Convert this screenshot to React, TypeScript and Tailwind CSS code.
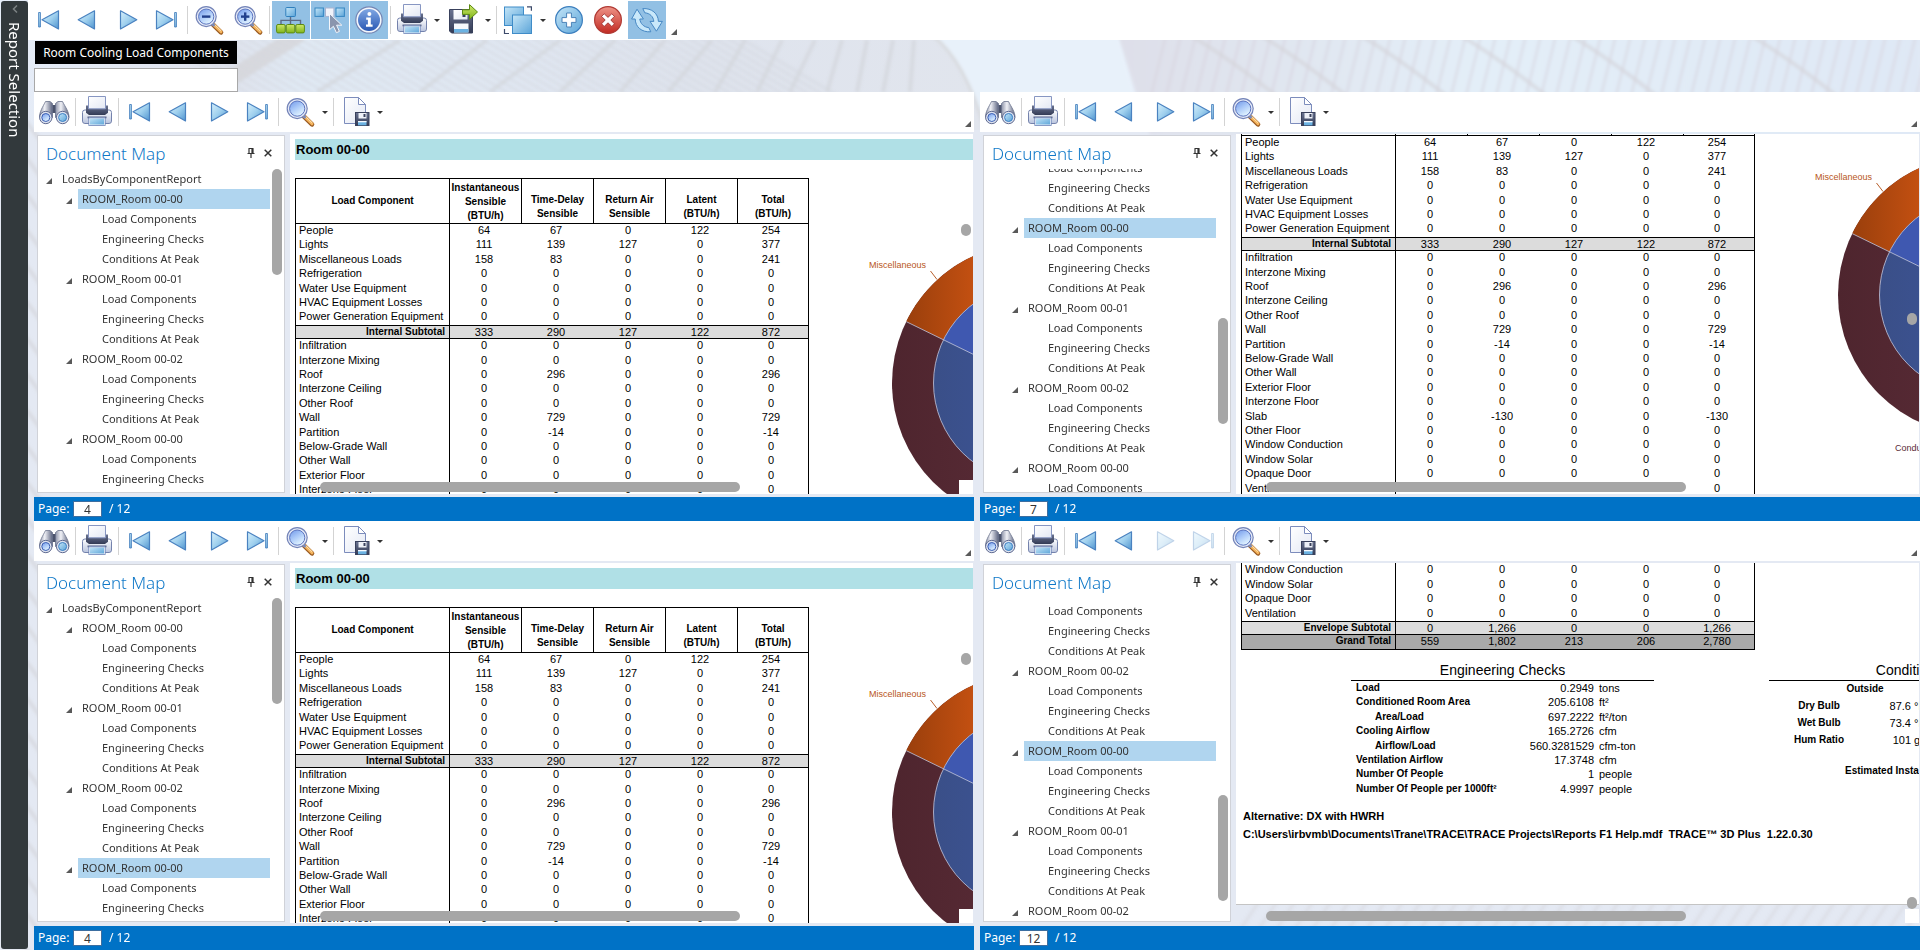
import React from "react";

const UI = "font-['Noto_Sans','Open_Sans',sans-serif]";
const DOC = "font-['Liberation_Sans',Arial,sans-serif]";

/* ---------- icons ---------- */

function Defs() {
  return (
    <svg className="absolute h-0 w-0" aria-hidden="true">
      <defs>
        <linearGradient id="nav" x1="0" y1="0" x2="1" y2="1">
          <stop offset="0" stopColor="#d6effb" />
          <stop offset="0.5" stopColor="#9fd0ee" />
          <stop offset="1" stopColor="#4f94cf" />
        </linearGradient>
        <linearGradient id="lens" x1="0" y1="0" x2="0.6" y2="1">
          <stop offset="0" stopColor="#6f97e8" />
          <stop offset="0.5" stopColor="#a9c8f8" />
          <stop offset="1" stopColor="#e2f4ff" />
        </linearGradient>
        <linearGradient id="metal" x1="0" y1="0" x2="0" y2="1">
          <stop offset="0" stopColor="#ffffff" />
          <stop offset="1" stopColor="#b9c4de" />
        </linearGradient>
        <linearGradient id="paper" x1="0" y1="0" x2="1" y2="1">
          <stop offset="0" stopColor="#ffffff" />
          <stop offset="1" stopColor="#e3e8f4" />
        </linearGradient>
        <linearGradient id="barrel" x1="0" y1="0" x2="1" y2="0">
          <stop offset="0" stopColor="#8d93a8" />
          <stop offset="0.4" stopColor="#f0f1f6" />
          <stop offset="1" stopColor="#5c6480" />
        </linearGradient>
        <linearGradient id="slate" x1="0" y1="0" x2="0" y2="1">
          <stop offset="0" stopColor="#6a7391" />
          <stop offset="1" stopColor="#333b55" />
        </linearGradient>
        <linearGradient id="sky" x1="0" y1="0" x2="1" y2="1">
          <stop offset="0" stopColor="#c5e6f8" />
          <stop offset="1" stopColor="#5ba4d8" />
        </linearGradient>
        <linearGradient id="lime" x1="0" y1="0" x2="0" y2="1">
          <stop offset="0" stopColor="#cfe86a" />
          <stop offset="1" stopColor="#7fb41c" />
        </linearGradient>
        <linearGradient id="red" x1="0" y1="0" x2="0" y2="1">
          <stop offset="0" stopColor="#ee9488" />
          <stop offset="1" stopColor="#c22a22" />
        </linearGradient>
        <linearGradient id="royal" x1="0" y1="0" x2="0" y2="1">
          <stop offset="0" stopColor="#7fa6e2" />
          <stop offset="1" stopColor="#2a59b4" />
        </linearGradient>
        <linearGradient id="wedgeOrange" x1="0" y1="0" x2="1" y2="0">
          <stop offset="0" stopColor="#9a3f0c" />
          <stop offset="0.6" stopColor="#c85212" />
          <stop offset="1" stopColor="#d65a16" />
        </linearGradient>
        <linearGradient id="wedgeMaroon" x1="0" y1="0" x2="1" y2="0">
          <stop offset="0" stopColor="#4e252e" />
          <stop offset="1" stopColor="#663240" />
        </linearGradient>
        <linearGradient id="wedgeBlue" x1="0" y1="0" x2="1" y2="0">
          <stop offset="0" stopColor="#3a4f88" />
          <stop offset="1" stopColor="#405aa8" />
        </linearGradient>
      </defs>
    </svg>
  );
}

function Svg({ children }: { children: React.ReactNode }) {
  return (
    <svg viewBox="0 0 38 38" className="h-[38px] w-[38px]" aria-hidden="true">
      {children}
    </svg>
  );
}

const navStroke = { fill: "url(#nav)", stroke: "#4a82c0", strokeWidth: 1.2, strokeLinejoin: "round" as const };

const FirstIcon = () => (
  <Svg>
    <rect x="8.6" y="11.5" width="1.8" height="14.5" {...navStroke} strokeWidth={0.9} />
    <path d="M12 18.8 28.5 9.8V28Z" {...navStroke} />
  </Svg>
);
const PrevIcon = () => (
  <Svg>
    <path d="M9.2 18.8 25.5 9.8V28Z" {...navStroke} />
  </Svg>
);
const NextIcon = () => (
  <Svg>
    <path d="M28.8 18.8 12.5 9.8V28Z" {...navStroke} />
  </Svg>
);
const LastIcon = () => (
  <Svg>
    <path d="M26 18.8 9.5 9.8V28Z" {...navStroke} />
    <rect x="27.6" y="11.5" width="1.8" height="14.5" {...navStroke} strokeWidth={0.9} />
  </Svg>
);

function Magnifier({ sign }: { sign?: "+" | "-" }) {
  return (
    <Svg>
      <path d="M22.8 23.4 31 31.3" stroke="#9a5a20" strokeWidth="4.6" strokeLinecap="round" />
      <path d="M23.4 23.4 31 30.8" stroke="#f5b55e" strokeWidth="3" strokeLinecap="round" />
      <path d="M23.6 22.6 30.8 29.6" stroke="#fde3b4" strokeWidth="1" strokeLinecap="round" />
      <path d="m21.5 22 3 3" stroke="#7d8bb4" strokeWidth="3" />
      <circle cx="16.2" cy="15.6" r="10" fill="#e6ebf7" stroke="#7484b8" strokeWidth="1.2" />
      <circle cx="16.2" cy="15.6" r="7.6" fill="url(#lens)" stroke="#5b74bf" strokeWidth="1" />
      {sign && <path d="M12 15.6h8.4" stroke="#22408c" strokeWidth="2.4" />}
      {sign === "+" && <path d="M16.2 11.4v8.4" stroke="#22408c" strokeWidth="2.4" />}
    </Svg>
  );
}

const HierarchyIcon = () => (
  <Svg>
    <path d="M18.5 15v8M9 23v-3.6h19.5V23" fill="none" stroke="#5c6a85" strokeWidth="1.4" />
    <rect x="13.8" y="6.5" width="9.6" height="9" rx="0.8" fill="url(#sky)" stroke="#2f7fbd" />
    {[4.6, 14.2, 23.8].map((x) => (
      <rect key={x} x={x} y="23.5" width="8.6" height="8.4" rx="1.4" fill="url(#lime)" stroke="#5c8a12" />
    ))}
  </Svg>
);

const SelectIcon = () => (
  <Svg>
    <rect x="4" y="7" width="8.4" height="8.4" fill="url(#sky)" stroke="#3787c2" />
    <rect x="14.5" y="7" width="8.4" height="8.4" fill="#f1f3fa" stroke="#a9b3d0" />
    <rect x="25" y="7" width="8.4" height="8.4" fill="url(#sky)" stroke="#3787c2" />
    <path d="M18.5 12.5v16.2l3.9-3.4 3 6.4 3-1.3-2.8-6.2h5.2Z" fill="#8a95ad" stroke="#f4f6fb" strokeWidth="1" />
  </Svg>
);

const InfoIcon = () => (
  <Svg>
    <circle cx="19" cy="19" r="13.2" fill="#f3f6fc" stroke="#7486b4" strokeWidth="1.2" />
    <circle cx="19" cy="19" r="11" fill="url(#royal)" />
    <circle cx="19.4" cy="13" r="2" fill="#fff" />
    <path d="M16.2 16.6h4.6v7h1.8v2.2h-6.6v-2.2h1.9v-4.8h-1.7Z" fill="#fff" />
  </Svg>
);

const PrinterIcon = () => (
  <Svg>
    <rect x="4.5" y="17" width="29" height="13.5" rx="2.4" fill="url(#metal)" stroke="#7482ac" />
    <path d="M8 12.5h22v7.200l-3 2.300H11l-3-2.300Z" fill="url(#slate)" />
    <path d="M10.500 3.500h17v12.300h-17Z" fill="url(#paper)" stroke="#8796c2" />
    <rect x="9.500" y="23.500" width="19" height="1.800" fill="#5d6788" />
    <rect x="11.500" y="25" width="15" height="7" fill="url(#sky)" stroke="#eef5fc" />
    <rect x="10.800" y="24.800" width="16.400" height="7.600" fill="none" stroke="#6c84b8" strokeWidth="0.800" />
  </Svg>
);

const SaveExportIcon = () => (
  <Svg>
    <path d="M5.5 8.5h23V32h-21l-2-2Z" fill="url(#slate)" stroke="#39415c" />
    <rect x="9.5" y="9" width="14" height="9.5" fill="url(#paper)" />
    <rect x="18.5" y="10" width="3" height="6" fill="#39415c" />
    <rect x="10" y="22.5" width="14.5" height="9" fill="#f6f9fd" />
    <rect x="10" y="28" width="14.5" height="3.5" fill="#6bb2e2" />
    <path d="M18.5 8.8h7V3.6l8 7.4-8 7.4v-5h-7Z" fill="url(#lime)" stroke="#5c8a12" />
  </Svg>
);

const CopyIcon = () => (
  <Svg>
    <rect x="5.5" y="6" width="19" height="18.5" fill="url(#sky)" stroke="#3f8cc8" />
    <rect x="13.5" y="14" width="19" height="18.500" fill="url(#sky)" stroke="#3f8cc8" />
    <path d="M28 5.800h4.400v4M5.500 28v4.500H10" fill="none" stroke="#3c4a6a" strokeWidth="1.200" />
  </Svg>
);

const AddIcon = () => (
  <Svg>
    <circle cx="19" cy="19" r="13.400" fill="url(#sky)" stroke="#3d7fbe" strokeWidth="1.200" />
    <path d="M16.600 12h4.800v4.600H26v4.800h-4.600V26h-4.800v-4.600H12v-4.800h4.600Z" fill="#fff" stroke="#4a82b8" />
  </Svg>
);

const DeleteIcon = () => (
  <Svg>
    <circle cx="19" cy="19" r="13.400" fill="url(#red)" stroke="#b03a34" strokeWidth="1.200" />
    <path
      d="m15.200 12.800 3.800 3.600 3.800-3.600 2.600 2.600-3.600 3.600 3.600 3.800-2.600 2.600-3.800-3.600-3.800 3.600-2.600-2.600 3.600-3.800-3.600-3.600Z"
      fill="#fff"
      stroke="#8f1a18"
      strokeWidth="0.700"
    />
  </Svg>
);

const RefreshIcon = () => (
  <Svg>
    <path
      d="M9 8.200 15.400 18h-3.600c.4 4.400 4 8.200 9 8.600l2 4.200C13.600 31.400 7.400 26 7.200 18H3.600Z"
      fill="#c9e8fa"
      stroke="#4788c4"
    />
    <path
      d="M28.400 30.200 22 20.400h3.800c-.4-4.800-4-8.200-9-8.600l-2-4.200c9-.6 15.400 5 15.600 12.800H34.400Z"
      fill="#c9e8fa"
      stroke="#4788c4"
    />
  </Svg>
);

const BinocularsIcon = () => (
  <Svg>
    <rect x="16" y="12" width="7" height="8" fill="#4b536c" />
    <path d="M10.500 8.500h4.500l2.500 2v14H4.500c0-6 3-10 6-16Z" fill="url(#barrel)" stroke="#6a728c" strokeWidth="0.800" />
    <path d="M27.500 8.500H23l-2.500 2v14h13.500c0-6-3.500-10-6.500-16Z" fill="url(#barrel)" stroke="#6a728c" strokeWidth="0.800" />
    <circle cx="10.800" cy="24.500" r="6.200" fill="#dfe4f0" stroke="#5e6990" />
    <circle cx="10.800" cy="24.500" r="4" fill="url(#lens)" stroke="#3c5fb4" />
    <circle cx="27.600" cy="24.500" r="6.200" fill="#dfe4f0" stroke="#5e6990" />
    <circle cx="27.600" cy="24.500" r="4" fill="url(#sky)" stroke="#3c7fc4" />
  </Svg>
);

const SaveDocIcon = () => (
  <Svg>
    <path d="M8.500 4.500h14l7 7V30.500h-21Z" fill="url(#paper)" stroke="#7c8cbc" />
    <path d="M22.500 4.500v7h7Z" fill="#fff" stroke="#7c8cbc" />
    <rect x="19.500" y="19.500" width="13.500" height="13" fill="url(#slate)" stroke="#39415c" />
    <rect x="22.500" y="20" width="8" height="5.500" fill="#eef1f8" />
    <rect x="27.500" y="21" width="2" height="3" fill="#39415c" />
    <rect x="22" y="28" width="8.500" height="4.300" fill="#6bb2e2" />
    <rect x="22" y="28" width="8.500" height="1.300" fill="#f6f9fd" />
  </Svg>
);

/* ---------- toolbar parts ---------- */

function ToolButton({
  label,
  active,
  disabled,
  children,
}: {
  label: string;
  active?: boolean;
  disabled?: boolean;
  children: React.ReactNode;
}) {
  return (
    <button
      type="button"
      aria-label={label}
      disabled={disabled}
      className={
        "flex h-[38px] w-[38px] shrink-0 items-center justify-center " +
        (active ? "bg-[#92c0e4] " : "") +
        (disabled ? "opacity-35" : "")
      }
    >
      {children}
    </button>
  );
}

function Caret({ label }: { label: string }) {
  return (
    <button type="button" aria-label={label} className="-ml-px flex h-[38px] w-3 shrink-0 items-center justify-center">
      <svg viewBox="0 0 6 3" className="h-[3px] w-[6px]" aria-hidden="true">
        <path d="M0 0h6L3 3Z" fill="#333" />
      </svg>
    </button>
  );
}

const Separator = () => <span className="mx-px h-7 w-px shrink-0 bg-[#d3d3d3]" />;

const Grip = () => (
  <svg viewBox="0 0 6 6" className="mb-[5px] h-[6px] w-[6px] shrink-0 self-end" aria-hidden="true">
    <path d="M6 0v6H0Z" fill="#5a5a5a" />
  </svg>
);

function MainToolbar() {
  return (
    <div role="toolbar" aria-label="Report tools" className="flex h-10 shrink-0 items-center gap-px bg-white pl-0.5">
      <ToolButton label="First page"><FirstIcon /></ToolButton>
      <ToolButton label="Previous page"><PrevIcon /></ToolButton>
      <ToolButton label="Next page"><NextIcon /></ToolButton>
      <ToolButton label="Last page"><LastIcon /></ToolButton>
      <Separator />
      <ToolButton label="Zoom out"><Magnifier sign="-" /></ToolButton>
      <ToolButton label="Zoom in"><Magnifier sign="+" /></ToolButton>
      <Separator />
      <ToolButton label="Document map" active><HierarchyIcon /></ToolButton>
      <ToolButton label="Select" active><SelectIcon /></ToolButton>
      <ToolButton label="Information" active><InfoIcon /></ToolButton>
      <Separator />
      <ToolButton label="Print"><PrinterIcon /></ToolButton>
      <Caret label="Print options" />
      <ToolButton label="Export"><SaveExportIcon /></ToolButton>
      <Caret label="Export options" />
      <Separator />
      <ToolButton label="Copy view"><CopyIcon /></ToolButton>
      <Caret label="Copy options" />
      <ToolButton label="Add"><AddIcon /></ToolButton>
      <ToolButton label="Remove"><DeleteIcon /></ToolButton>
      <ToolButton label="Synchronize" active><RefreshIcon /></ToolButton>
      <span className="w-[3px]" />
      <Grip />
    </div>
  );
}

function PanelToolbar({ atEnd }: { atEnd?: boolean }) {
  return (
    <div role="toolbar" aria-label="Page tools" className="flex h-10 shrink-0 items-center gap-px bg-white pr-[3px] pl-px">
      <ToolButton label="Find"><BinocularsIcon /></ToolButton>
      <Separator />
      <ToolButton label="Print"><PrinterIcon /></ToolButton>
      <Separator />
      <ToolButton label="First page"><FirstIcon /></ToolButton>
      <ToolButton label="Previous page"><PrevIcon /></ToolButton>
      <ToolButton label="Next page" disabled={atEnd}><NextIcon /></ToolButton>
      <ToolButton label="Last page" disabled={atEnd}><LastIcon /></ToolButton>
      <Separator />
      <ToolButton label="Zoom"><Magnifier /></ToolButton>
      <Caret label="Zoom options" />
      <Separator />
      <ToolButton label="Save document"><SaveDocIcon /></ToolButton>
      <Caret label="Save options" />
      <span className="flex-1" />
      <Grip />
    </div>
  );
}

/* ---------- document map ---------- */

type Node = { text: string; level: 0 | 1 | 2; selected?: boolean };

function room(name: string, selected = false): Node[] {
  return [
    { text: `ROOM_Room ${name}`, level: 1, selected },
    { text: "Load Components", level: 2 },
    { text: "Engineering Checks", level: 2 },
    { text: "Conditions At Peak", level: 2 },
  ];
}

const indent = { 0: "pl-2", 1: "pl-7", 2: "pl-[64px]" };

function DocumentMap({ nodes, scroll, thumb }: { nodes: Node[]; scroll: string; thumb: string }) {
  return (
    <section className="mt-[3px] mb-px ml-[3px] flex w-[248px] shrink-0 flex-col overflow-hidden border border-[#d0d2d8] bg-white">
      <header className="flex h-[33px] shrink-0 items-center pr-[10px] pl-2">
        <h2 className="mt-[2px] flex-1 text-[17px] leading-6 font-light text-[#0f78c8]">Document Map</h2>
        <button type="button" aria-label="Pin" className="mr-[5px] flex h-4 w-3 items-center justify-center">
          <svg viewBox="0 0 8 10" className="h-[10px] w-2" aria-hidden="true">
            <path d="M1.500.5h5M2 .5v5M5 .5v5M6 .5v5M.5 5.500h7M4 6v4" stroke="#333" strokeWidth="1.200" fill="none" />
          </svg>
        </button>
        <button type="button" aria-label="Close" className="flex h-4 w-3 items-center justify-center">
          <svg viewBox="0 0 8 8" className="h-2 w-2" aria-hidden="true">
            <path d="m.7.7 6.600 6.600m0-6.600L.7 7.300" stroke="#333" strokeWidth="1.500" />
          </svg>
        </button>
      </header>
      <div className="relative min-h-0 flex-1 overflow-hidden">
        <ul className={scroll}>
          {nodes.map((n, i) => (
            <li key={i} className={"flex h-5 items-center pr-[14px] " + indent[n.level]}>
              {n.level < 2 && (
                <svg viewBox="0 0 6 6" className="mt-[3px] mr-[6px] h-[6px] w-[6px] shrink-0" aria-hidden="true">
                  <path d="M6 0v6H0Z" fill="#595959" />
                </svg>
              )}
              <span
                className={
                  "flex-1 text-[11px] leading-5 whitespace-nowrap text-[#333] " +
                  (n.level < 2 ? "pl-1 " : "") +
                  (n.selected ? "bg-[#b0d5ef]" : "")
                }
              >
                {n.text}
              </span>
            </li>
          ))}
        </ul>
        <div className={"absolute right-[2px] h-[106px] w-[10px] rounded-full bg-[#a6a6a6] " + thumb} />
      </div>
    </section>
  );
}

/* ---------- report ---------- */

type Row = [string, ...string[]];
const zero = (name: string): Row => [name, "0", "0", "0", "0", "0"];

const rows: Row[] = [
  ["People", "64", "67", "0", "122", "254"],
  ["Lights", "111", "139", "127", "0", "377"],
  ["Miscellaneous Loads", "158", "83", "0", "0", "241"],
  zero("Refrigeration"),
  zero("Water Use Equipment"),
  zero("HVAC Equipment Losses"),
  zero("Power Generation Equipment"),
  ["Internal Subtotal", "333", "290", "127", "122", "872"],
  zero("Infiltration"),
  zero("Interzone Mixing"),
  ["Roof", "0", "296", "0", "0", "296"],
  zero("Interzone Ceiling"),
  zero("Other Roof"),
  ["Wall", "0", "729", "0", "0", "729"],
  ["Partition", "0", "-14", "0", "0", "-14"],
  zero("Below-Grade Wall"),
  zero("Other Wall"),
  zero("Exterior Floor"),
  zero("Interzone Floor"),
  ["Slab", "0", "-130", "0", "0", "-130"],
  zero("Other Floor"),
  zero("Window Conduction"),
  zero("Window Solar"),
  zero("Opaque Door"),
  zero("Ventilation"),
  ["Envelope Subtotal", "0", "1,266", "0", "0", "1,266"],
  ["Grand Total", "559", "1,802", "213", "206", "2,780"],
];

const rowHeights = ["h-[14px]", "h-[15px]", "h-[14px]", "h-[15px]", "h-[14px]"];
const rowHeight = (i: number) => rowHeights[i % 5];

const heads: string[][] = [
  ["Instantaneous", "Sensible", "(BTU/h)"],
  ["Time-Delay", "Sensible"],
  ["Return Air", "Sensible"],
  ["Latent", "(BTU/h)"],
  ["Total", "(BTU/h)"],
];

function LoadTable() {
  return (
    <table className="w-[514px] shrink-0 table-fixed border-separate border-spacing-0 self-start border border-b-0 border-black text-[11px] leading-[12px]">
      <colgroup>
        <col className="w-[154px]" />
        <col className="w-[72px]" />
        <col className="w-[72px]" />
        <col className="w-[72px]" />
        <col className="w-[72px]" />
        <col />
      </colgroup>
      <thead>
        <tr className="h-[45px] text-[10px] leading-[14px]">
          <th className="border-r border-b border-black p-0 align-middle font-bold">Load Component</th>
          {heads.map((lines, i) => (
            <th
              key={i}
              className={"border-b border-black p-0 align-bottom font-bold " + (i < 4 ? "border-r " : "") + (i ? "pb-0.5" : "")}
            >
              {lines.map((l) => (
                <span key={l} className="block whitespace-nowrap">{l}</span>
              ))}
            </th>
          ))}
        </tr>
      </thead>
      <tbody>
        {rows.map(([name, ...values], i) => {
          const total = name === "Grand Total";
          const sub = name.endsWith("Subtotal");
          const line =
            (sub ? "border-y border-black bg-[#dcdcdc] " : "") + (total ? "border-b border-black bg-[#a9a9a9] " : "");
          return (
            <tr key={name} className={rowHeight(i)}>
              <th
                scope="row"
                className={
                  "border-r border-black py-0 pr-1 pl-[3px] align-top whitespace-nowrap " +
                  line +
                  (sub || total ? "text-right text-[10px] font-bold" : "text-left font-normal")
                }
              >
                {name}
              </th>
              {values.map((v, j) => (
                <td key={j} className={"py-0 pr-1 pl-0 text-center align-top " + line}>{v}</td>
              ))}
            </tr>
          );
        })}
      </tbody>
    </table>
  );
}

function LoadChart({ labelled }: { labelled: boolean }) {
  return (
    <svg viewBox="560 44 360 436" className="ml-[41px] h-[436px] w-[360px] shrink-0" role="img" aria-label="Load chart">
      <circle cx="742" cy="249" r="140" fill="url(#wedgeMaroon)" />
      <path d="M742 249 616.200 187.600A140 140 0 0 1 742 109Z" fill="url(#wedgeOrange)" />
      <circle cx="742" cy="249" r="98.500" fill="url(#wedgeBlue)" />
      <path d="M742 249 653.500 205.800A98.500 98.500 0 0 1 742 150.500Z" fill="#3f58b0" />
      <path d="M616.200 187.600 742 249" stroke="#c3c7dd" strokeWidth="0.800" />
      <circle cx="742" cy="249" r="98.500" fill="none" stroke="#c3c7dd" strokeWidth="0.800" />
      <path d="m640.500 137 6.500 8.500" stroke="#b8602c" />
      <text x="579" y="134" fontSize="9" fill="#b8561a">Miscellaneous</text>
      {labelled && <text x="659" y="405" fontSize="9" fill="#5a2a38">Conduction</text>}
    </svg>
  );
}

const checks: [string, string, string, boolean][] = [
  ["Load", "0.2949", "tons", false],
  ["Conditioned Room Area", "205.6108", "ft²", false],
  ["Area/Load", "697.2222", "ft²/ton", true],
  ["Cooling Airflow", "165.2726", "cfm", false],
  ["Airflow/Load", "560.3281529", "cfm-ton", true],
  ["Ventilation Airflow", "17.3748", "cfm", false],
  ["Number Of People", "1", "people", false],
  ["Number Of People per 1000ft²", "4.9997", "people", false],
];

function Summary() {
  return (
    <div className="mt-[9px] ml-[110px] flex gap-[115px] text-[11px] leading-[14px]">
      <section className="w-[303px] shrink-0">
        <h3 className="border-b border-black text-center text-[14px] leading-5">Engineering Checks</h3>
        <table className="w-full border-separate border-spacing-0">
          <tbody>
            {checks.map(([name, value, unit, inner], i) => (
              <tr key={name} className={rowHeight(i)}>
                <th
                  scope="row"
                  className={"w-[160px] py-0 pr-0 text-left align-top text-[10px] font-bold whitespace-nowrap " + (inner ? "pl-6" : "pl-[5px]")}
                >
                  {name}
                </th>
                <td className="w-[83px] p-0 text-right align-top">{value}</td>
                <td className="py-0 pr-0 pl-[5px] align-top">{unit}</td>
              </tr>
            ))}
          </tbody>
        </table>
      </section>
      <section className="w-[332px] shrink-0">
        <h3 className="border-b border-black text-center text-[14px] leading-5">Conditions At Peak</h3>
        <table className="w-[192px] table-fixed border-separate border-spacing-0">
          <colgroup>
            <col className="w-[100px]" />
            <col className="w-[42px]" />
            <col />
          </colgroup>
          <thead>
            <tr className="h-4">
              <th colSpan={3} className="p-0 text-center text-[10px] font-bold">Outside</th>
            </tr>
          </thead>
          <tbody>
            {[
              ["Dry Bulb", "87.6", "°F"],
              ["Wet Bulb", "73.4", "°F"],
              ["Hum Ratio", "101", "gr/lb"],
            ].map(([name, value, unit]) => (
              <tr key={name} className="h-[17px]">
                <th scope="row" className="p-0 text-center text-[10px] font-bold">{name}</th>
                <td className="p-0 text-right">{value}</td>
                <td className="py-0 pr-0 pl-[3px]">{unit}</td>
              </tr>
            ))}
          </tbody>
        </table>
        <p className="mt-4 ml-[76px] text-[10px] font-bold whitespace-nowrap">Estimated Instantaneous</p>
      </section>
    </div>
  );
}

function Report({ scroll, dot, corner, labelled }: { scroll: string; dot: string; corner: boolean; labelled: boolean }) {
  return (
    <section className={"relative mt-0.5 mr-px ml-[5px] min-w-0 flex-1 overflow-hidden " + DOC}>
      <div className={"h-[734px] w-[1100px] border-b border-[#c4c4c4] bg-white pt-[5px] pl-[5px] text-black " + scroll}>
        <h2 className="mb-[18px] bg-[#b0e0e6] pt-px pl-px text-[13px] leading-5 font-bold">Room 00-00</h2>
        <div className="flex">
          <LoadTable />
          <LoadChart labelled={labelled} />
        </div>
        <Summary />
        <footer className="mt-[11px] pl-[2px] text-[11px] leading-[18px] font-bold">
          <p>Alternative: DX with HWRH</p>
          <p className="whitespace-pre">{"C:\\Users\\irbvmb\\Documents\\Trane\\TRACE\\TRACE Projects\\Reports F1 Help.mdf  TRACE™ 3D Plus  1.22.0.30"}</p>
        </footer>
      </div>
      {corner && <div className="absolute right-0 bottom-0 h-[14px] w-[14px] bg-white" />}
      <div className={"absolute right-[2px] h-3 w-[10px] rounded-full bg-[#a6a6a6] " + dot} />
      <div className="absolute bottom-[2px] left-[30px] h-[10px] w-[420px] rounded-full bg-[#a6a6a6]" />
    </section>
  );
}

/* ---------- panels ---------- */

type PanelProps = {
  id: string;
  page: string;
  nodes: Node[];
  mapScroll: string;
  mapThumb: string;
  docScroll: string;
  dot: string;
  corner: boolean;
  atEnd?: boolean;
};

function Panel(p: PanelProps) {
  return (
    <article className="flex min-h-0 min-w-0 flex-col">
      <PanelToolbar atEnd={p.atEnd} />
      <div className="flex min-h-0 flex-1 pb-[3px]">
        <DocumentMap nodes={p.nodes} scroll={p.mapScroll} thumb={p.mapThumb} />
        <Report scroll={p.docScroll} dot={p.dot} corner={p.corner} labelled={!p.atEnd} />
      </div>
      <footer className="flex h-6 shrink-0 items-center bg-[#0072c6] pl-1 text-[12px] text-white">
        <label htmlFor={p.id} className="w-[35px]">Page:</label>
        <input
          id={p.id}
          defaultValue={p.page}
          className="h-4 w-[29px] border border-[#3c6ea0] bg-white text-center text-[12px] leading-none text-[#333]"
        />
        <span className="ml-[7px]">/ 12</span>
      </footer>
    </article>
  );
}

const panels: PanelProps[] = [
  {
    id: "page-1",
    page: "4",
    nodes: [{ text: "LoadsByComponentReport", level: 0 }, ...room("00-00", true), ...room("00-01"), ...room("00-02"), ...room("00-00").slice(0, 3)],
    mapScroll: "mt-0",
    mapThumb: "top-0",
    docScroll: "mt-0",
    dot: "top-[90px]",
    corner: true,
  },
  {
    id: "page-2",
    page: "7",
    nodes: [...room("00-02").slice(1), ...room("00-00", true), ...room("00-01"), ...room("00-02"), ...room("00-00").slice(0, 2)],
    mapScroll: "-mt-[11px]",
    mapThumb: "top-[149px]",
    docScroll: "-mt-[88px]",
    dot: "top-[179px]",
    corner: false,
  },
  {
    id: "page-3",
    page: "4",
    nodes: [{ text: "LoadsByComponentReport", level: 0 }, ...room("00-00"), ...room("00-01"), ...room("00-02"), ...room("00-00", true).slice(0, 3)],
    mapScroll: "mt-0",
    mapThumb: "top-0",
    docScroll: "mt-0",
    dot: "top-[90px]",
    corner: true,
  },
  {
    id: "page-4",
    page: "12",
    nodes: [...room("00-01").slice(1), ...room("00-02"), ...room("00-00", true), ...room("00-01"), ...room("00-02").slice(0, 1)],
    mapScroll: "mt-[3px]",
    mapThumb: "top-[197px]",
    docScroll: "-mt-[392px]",
    dot: "top-[334px]",
    corner: true,
    atEnd: true,
  },
];

/* Faint architectural backdrop: roof lattice on the left, glass swoosh, ribbed facade on the right. */
const beams: [number, number][] = [
  [317, 400], [420, 487], [490, 560], [560, 615], [620, 665], [668, 712], [715, 745], [757, 782],
  [790, 815], [827, 842], [857, 867], [883, 893], [910, 914],
];

function Backdrop() {
  const lattice = Array.from({ length: 46 }, (_, i) => 150 + i * 13);
  const ribs = Array.from({ length: 52 }, (_, i) => 1150 + i * 15);
  return (
    <svg
      viewBox="0 0 1920 950"
      preserveAspectRatio="none"
      className="absolute inset-0 -z-10 h-full w-full"
      aria-hidden="true"
    >
      <defs>
        <linearGradient id="roof" x1="0" x2="1">
          <stop offset="0" stopColor="#e6edf8" />
          <stop offset="0.220" stopColor="#e0e3ed" />
          <stop offset="0.300" stopColor="#e1ebf6" />
          <stop offset="0.480" stopColor="#e1e9f4" />
          <stop offset="0.700" stopColor="#dfe4ee" />
          <stop offset="1" stopColor="#e1e5ed" />
        </linearGradient>
        <linearGradient id="facade" x1="0" x2="1">
          <stop offset="0" stopColor="#dedfe9" />
          <stop offset="0.450" stopColor="#e3eef8" />
          <stop offset="1" stopColor="#dfe8f5" />
        </linearGradient>
        <filter id="soft"><feGaussianBlur stdDeviation="1.500" /></filter>
      </defs>
      <rect width="1920" height="950" fill="#e4e9f3" />
      <rect width="990" height="130" fill="url(#roof)" />
      <g filter="url(#soft)" fill="none">
        {lattice.map((x) => (
          <path key={x} d={`M${x} 35 l110 65`} stroke="#d6dae1" strokeWidth="3.500" opacity="0.500" />
        ))}
        <path d="M225 82 300 34" stroke="#d6d7dc" strokeWidth="16" opacity="0.900" />
        {beams.map(([low, high]) => (
          <path key={low} d={`M${low} 92 ${high} 40`} stroke="#d3d6dc" strokeWidth="4" opacity="0.700" />
        ))}
        <path d="M932 35Q965 60 985 130H1145L1118 35Z" fill="#e8f1fa" />
        <path d="M932 35Q965 60 985 130" stroke="#d8dade" strokeWidth="3" />
        <path d="M1118 35 1150 135H1920V35Z" fill="url(#facade)" />
        {ribs.map((x) => (
          <path key={x} d={`M${x} 100 l16 -65`} stroke="#d8d3de" strokeWidth="3" opacity="0.500" />
        ))}
        {[1190, 1260, 1360, 1460, 1570, 1750].map((x) => (
          <path key={x} d={`M${x} 35 q50 30 110 80`} stroke="#d4d3d8" strokeWidth="4" opacity="0.600" />
        ))}
        {Array.from({ length: 24 }, (_, i) => (
          <path key={i} d={`M25 ${120 + i * 36} l18 24`} stroke="#d2d4d9" strokeWidth="4" opacity="0.600" />
        ))}
        {Array.from({ length: 40 }, (_, i) => (
          <path key={i} d={`M${1240 + i * 18} 930 l20 -30`} stroke="#d6d6dc" strokeWidth="3" opacity="0.500" />
        ))}
      </g>
    </svg>
  );
}

export default function App() {
  return (
    <div className={"relative isolate flex h-screen overflow-hidden text-[12px] " + UI}>
      <Defs />
      <Backdrop />
      <aside className="my-px ml-px flex w-[27px] shrink-0 flex-col items-center rounded-[3px] bg-[#32393c]">
        <button type="button" className="flex flex-col items-center text-white">
          <svg viewBox="0 0 6 8" className="mt-1 mb-[9px] h-2 w-[6px]" aria-hidden="true">
            <path d="M5 .5 1.500 4 5 7.500" fill="none" stroke="#7d8385" strokeWidth="1.500" />
          </svg>
          <span className="text-[15px] leading-6 [writing-mode:vertical-rl]">Report Selection</span>
        </button>
      </aside>
      <main className="flex min-w-0 flex-1 flex-col">
        <MainToolbar />
        <div className="flex h-[52px] shrink-0 flex-col items-start pt-px pl-[6px]">
          <label
            htmlFor="report-name"
            className="ml-px w-[202px] bg-black text-center text-[12px] leading-[23px] whitespace-nowrap text-white"
          >
            Room Cooling Load Components
          </label>
          <input id="report-name" className="mt-1 h-6 w-[204px] border border-[#a8a8a8] bg-white px-1" />
        </div>
        <div className="grid min-h-0 flex-1 grid-cols-2 grid-rows-2 gap-x-[6px] pl-[6px]">
          {panels.map((p) => (
            <Panel key={p.id} {...p} />
          ))}
        </div>
      </main>
    </div>
  );
}
